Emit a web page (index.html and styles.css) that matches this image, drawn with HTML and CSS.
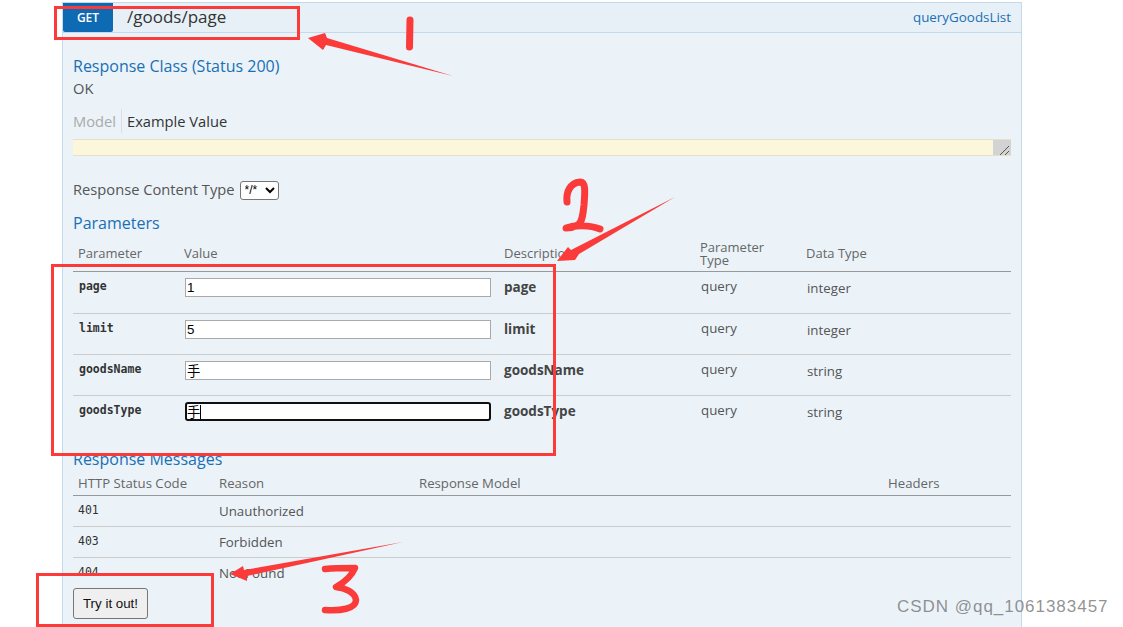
FILE: index.html
```html
<!DOCTYPE html>
<html lang="en">
<head>
<meta charset="utf-8">
<title>/goods/page</title>
<link rel="stylesheet" href="styles.css">
</head>
<body>
<main class="page">
  <section class="operation">
    <header class="op-head">
      <span class="method">GET</span>
      <span class="path">/goods/page</span>
      <a class="nickname">queryGoodsList</a>
    </header>
    <div class="op-body">
      <h4 class="title first">Response Class (Status 200)</h4>
      <p class="ok">OK</p>
      <div class="tabs">
        <span class="tab-model">Model</span>
        <span class="tab-example">Example Value</span>
      </div>
      <div class="sample"><span class="resizer"><svg width="18" height="15" viewBox="0 0 18 15"><path d="M7 15L16 6M12 15L16 11" stroke="#555" stroke-width="1" fill="none"/></svg></span></div>
      <div class="content-type">
        <label class="ctype-label">Response Content Type</label>
        <select class="ctype"><option>*/*</option></select>
      </div>
      <h4 class="title params-title">Parameters</h4>
      <table class="params">
        <thead>
          <tr>
            <th class="c1">Parameter</th><th class="c2">Value</th><th class="c3">Description</th><th class="c4">Parameter<br>Type</th><th class="c5">Data Type</th>
          </tr>
        </thead>
        <tbody>
          <tr class="first-row">
            <td class="name">page</td>
            <td class="val"><input class="field" value="1"></td>
            <td class="desc">page</td><td class="ptype">query</td><td class="dtype">integer</td>
          </tr>
          <tr>
            <td class="name">limit</td>
            <td class="val"><input class="field" value="5"></td>
            <td class="desc">limit</td><td class="ptype">query</td><td class="dtype">integer</td>
          </tr>
          <tr>
            <td class="name">goodsName</td>
            <td class="val"><input class="field" value="手"></td>
            <td class="desc">goodsName</td><td class="ptype">query</td><td class="dtype">string</td>
          </tr>
          <tr class="last">
            <td class="name">goodsType</td>
            <td class="val"><span class="focus-wrap"><input class="field focused" value="手"><i class="caret"></i></span></td>
            <td class="desc">goodsType</td><td class="ptype">query</td><td class="dtype">string</td>
          </tr>
        </tbody>
      </table>
      <h4 class="title messages-title">Response Messages</h4>
      <table class="messages">
        <thead>
          <tr><th class="m1">HTTP Status Code</th><th class="m2">Reason</th><th class="m3">Response Model</th><th class="m4">Headers</th></tr>
        </thead>
        <tbody>
          <tr><td class="code">401</td><td class="reason">Unauthorized</td><td></td><td></td></tr>
          <tr><td class="code">403</td><td class="reason">Forbidden</td><td></td><td></td></tr>
          <tr class="last"><td class="code"><span class="cut">404</span></td><td class="reason">Not Found</td><td></td><td></td></tr>
        </tbody>
      </table>
      <button class="try">Try it out!</button>
    </div>
  </section>
</main>
<svg class="marks" width="1123" height="627" viewBox="0 0 1123 627" aria-hidden="true">
  <g fill="none" stroke="#fb3a3a" stroke-width="3">
    <rect x="55.5" y="7.5" width="243" height="31"/>
    <rect x="52.5" y="265.500" width="502" height="189"/>
    <rect x="37.5" y="574.5" width="175" height="51"/>
  </g>
  <g fill="#fb3a3a">
    <polygon points="308,38 325,33 327,38 453,76 326,45 323,50"/>
    <polygon points="557,261 568,247 571,250 675,197 579,254 575,260"/>
    <polygon points="230,574 243,566 244,570 403,542 247,576 247,581"/>
  </g>
  <g fill="none" stroke="#fb3a3a" stroke-linecap="round" stroke-linejoin="round">
    <path d="M410 20L409.500 47" stroke-width="7"/>
    <path d="M567 202C566 192 570 183 580 182C586 182 585 192 584 205C583 215 582 222 578 225C572 228 566 228 566 228C575 225 590 225 600 229" stroke-width="7"/>
    <path d="M325 569C335 568 345 568 355 568C352 575 345 582 336 587C345 588 355 592 356 600C356 609 340 611 325 610" stroke-width="6.500"/>
  </g>
</svg>
<div class="watermark">CSDN @qq_1061383457</div>
</body>
</html>
```
FILE: styles.css
```css
html, body {
  margin: 0;
  padding: 0;
  height: 627px;
  overflow: hidden;
  background: #fff;
}
body {
  font-family: "Open Sans", "Noto Sans", sans-serif;
  color: #555;
  font-size: 13px;
}
.page {
  padding: 2px 0 0 62px;
}
.operation {
  width: 958px;
  height: 640px;
  border: 1px solid #c3d9ec;
  border-bottom: 0;
  background: #ebf3f9;
}
.op-head {
  display: flex;
  align-items: flex-start;
  height: 29px;
  background: #e7f0f7;
  border-bottom: 1px solid #c3d9ec;
}
.method {
  width: 50px;
  height: 29px;
  line-height: 29px;
  text-align: center;
  background: #0f6ab4;
  color: #fff;
  font-size: 12px;
  font-weight: 600;
  border-radius: 0 0 2px 2px;
}
.path {
  margin-left: 14px;
  font-size: 17px;
  line-height: 28px;
  color: #333;
}
.nickname {
  margin-left: auto;
  margin-right: 10px;
  font-size: 13.400px;
  line-height: 29px;
  color: #1a6fb5;
}
.op-body {
  padding: 0 10px;
}
.title {
  margin: 0;
  font-size: 16px;
  line-height: 20px;
  font-weight: 400;
  color: #1a6fb5;
}
.first {
  margin-top: 23px;
}
.ok {
  margin: 1px 0 0;
  line-height: 22px;
  font-size: 14.700px;
}
.tabs {
  display: flex;
  align-items: center;
  height: 24px;
  margin-top: 10px;
  font-size: 14.700px;
}
.tab-model {
  color: #aaa;
  padding-right: 5px;
  border-right: 1px solid #ddd;
  line-height: 24px;
}
.tab-example {
  color: #333;
  padding-left: 5px;
}
.sample {
  display: flex;
  justify-content: flex-end;
  height: 15px;
  margin-top: 6px;
  background: #fcf6db;
  border: 1px solid #e5e0c6;
  border-width: 1px 0;
}
.resizer {
  display: block;
  width: 18px;
  height: 15px;
  background: #d3d3d3;
  overflow: hidden;
}
.content-type {
  display: flex;
  align-items: center;
  height: 20px;
  margin-top: 24px;
  font-size: 14.700px;
}
.ctype-label {
  margin-bottom: 2px;
}
.ctype {
  width: 39px;
  height: 19px;
  margin: 0 0 0 5px;
  padding: 0;
  font-size: 12px;
  font-family: "Liberation Sans", sans-serif;
  color: #000;
  background: #fff;
  border: 1px solid #767676;
  border-radius: 3px;
}
.params-title {
  margin-top: 13px;
}
table {
  width: 938px;
  border-collapse: collapse;
  table-layout: fixed;
}
th {
  font-weight: 400;
  text-align: left;
  color: #666;
  font-size: 13px;
  line-height: 13px;
  padding: 0 0 0 5px;
  border-bottom: 1px solid #999;
}
td {
  padding: 0;
  vertical-align: top;
  border-bottom: 1px solid #ccc;
}
tr.last td {
  border-bottom: 0;
}
.params {
  margin-top: 7px;
}
.params thead tr {
  height: 31px;
}
.params th {
  padding-bottom: 4px;
}
.params th.c4 {
  padding-bottom: 2px;
}
.params tbody tr {
  height: 41px;
}
.params tbody tr.first-row {
  height: 42px;
}
.c1 { width: 101px; }
.c2 { width: 315px; }
.c3 { width: 191px; }
.c4 { width: 101px; }
.name {
  padding: 7px 0 0 6px;
  font-family: "DejaVu Sans Mono", monospace;
  font-size: 11.500px;
  font-weight: 700;
  line-height: 14px;
  color: #333;
}
.val {
  padding: 6px 0 0 6px;
}
.field {
  display: block;
  box-sizing: border-box;
  width: 306px;
  height: 19px;
  margin: 0;
  padding: 0 2px 0 1px;
  font-family: "Liberation Sans", "Noto Sans CJK SC", sans-serif;
  font-size: 13.330px;
  color: #000;
  background: #fff;
  border: 1px solid #a9a9a9;
  border-radius: 0;
  outline: 0;
}
.focus-wrap {
  position: relative;
  display: block;
  width: 306px;
}
.field.focused {
  border: 2px solid #101010;
  border-radius: 3px;
  padding: 0 1px 0 0;
}
.caret {
  position: absolute;
  left: 15px;
  top: 3px;
  width: 1px;
  height: 14px;
  background: #000;
}
.desc {
  padding: 6px 0 0 5px;
  font-size: 13.500px;
  font-weight: 700;
  line-height: 18px;
  color: #444;
}
.ptype {
  padding: 5px 0 0 6px;
  font-size: 13.300px;
  line-height: 18px;
}
.dtype {
  padding: 7px 0 0 6px;
  font-size: 13.300px;
  line-height: 18px;
}
.messages-title {
  margin-top: 13px;
}
.messages {
  margin-top: 2px;
}
.messages thead tr {
  height: 24px;
}
.messages th {
  padding-top: 2px;
  font-size: 13.200px;
}
.messages tbody tr {
  height: 31px;
}
.m1 { width: 136px; }
.m2 { width: 195px; }
.m3 { width: 464px; }
.code {
  padding: 7px 0 0 5px;
  font-family: "DejaVu Sans Mono", monospace;
  font-size: 11.500px;
  line-height: 14px;
  color: #333;
}
.cut {
  display: block;
  height: 9px;
  overflow: hidden;
}
.reason {
  padding: 6px 0 0 5px;
  font-size: 13.300px;
  line-height: 18px;
}
.try {
  display: block;
  box-sizing: border-box;
  width: 75px;
  height: 31px;
  margin: 0;
  padding: 0;
  font-family: "Liberation Sans", sans-serif;
  font-size: 13.330px;
  color: #111;
  background: #efefef;
  border: 1px solid #767676;
  border-radius: 3px;
}
.marks {
  position: absolute;
  left: 0;
  top: 0;
  pointer-events: none;
}
.watermark {
  position: absolute;
  left: 897px;
  top: 597px;
  font-family: "Liberation Sans", sans-serif;
  font-size: 17px;
  line-height: 20px;
  letter-spacing: 0.970px;
  color: rgba(110, 110, 110, 0.75);
  white-space: nowrap;
}
```
